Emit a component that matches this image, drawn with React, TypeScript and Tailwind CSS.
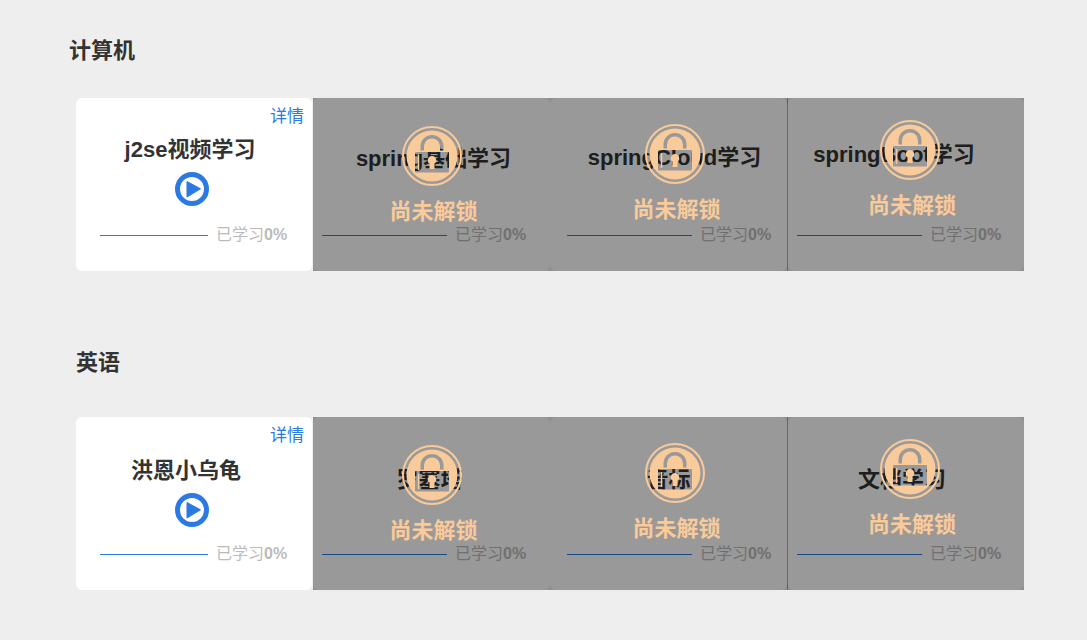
import { clsx } from "clsx";

type Course = {
  title: string;
  locked?: boolean;
};

type Subject = {
  name: string;
  headingClass: string;
  titleClass: string[];
  courses: Course[];
};

const subjects: Subject[] = [
  {
    name: "计算机",
    headingClass: "pl-[69px] mb-[31px]",
    titleClass: ["pt-[36px] pr-2", "pt-[45px] pl-1", "pt-[44px] pl-3", "pt-[41px] pr-6"],
    courses: [
      { title: "j2se视频学习" },
      { title: "spring基础学习", locked: true },
      { title: "springCloud学习", locked: true },
      { title: "springBoot学习", locked: true },
    ],
  },
  {
    name: "英语",
    headingClass: "pl-[76px] mb-[38px]",
    titleClass: ["pt-[38px] pr-4", "pt-[47px] pr-1", "pt-[47px]", "pt-[47px] pr-2"],
    courses: [
      { title: "洪恩小乌龟" },
      { title: "罗塞塔", locked: true },
      { title: "音标", locked: true },
      { title: "文档学习", locked: true },
    ],
  },
];

const progressClass = ["pl-6", "pl-[9px]", "pl-[17px]", "pl-[9px]"];
const lockClass = ["", "pt-[28px] pl-1", "pt-[26px] pl-4", "pt-[22px] pl-3"];

function PlayIcon() {
  return (
    <svg viewBox="0 0 34 34" className="size-[34px]" aria-hidden="true">
      <circle cx="17" cy="17" r="14.5" fill="none" stroke="#2b7ae4" strokeWidth="5" />
      <path d="M12 9.500 L25.500 16.800 L12 25 Z" fill="#2b7ae4" stroke="#2b7ae4" strokeLinejoin="round" />
    </svg>
  );
}

function LockIcon() {
  return (
    <svg viewBox="0 0 60 60" className="mr-1 size-[60px]" aria-hidden="true">
      <circle cx="30" cy="30" r="29" fill="none" stroke="#f9ca9a" strokeWidth="2" />
      <path
        fill="#f9ca9a"
        fillRule="evenodd"
        d="M30 4.500a25.500 25.500 0 1 0 0 51a25.500 25.500 0 1 0 0-51Z M18.500 24.500V20.500a11.500 11.500 0 0 1 23 0V24.500H38V20.500a8 8 0 0 0-16 0V24.500Z M14 26H46a1 1 0 0 1 1 1V45.500a1 1 0 0 1-1 1H14a1 1 0 0 1-1-1V27a1 1 0 0 1 1-1Z"
      />
      <path d="M16.500 29V44" stroke="#f9ca9a" strokeWidth="1.500" />
      <path d="M30 30a4.200 4.200 0 0 1 2.500 7.600V43h-5V37.600a4.200 4.200 0 0 1 2.500-7.600Z" fill="#f9ca9a" />
    </svg>
  );
}

function CourseCard({ course, column, titleClass }: { course: Course; column: number; titleClass: string }) {
  return (
    <li className={clsx("relative h-[173px]", column === 3 && "border-l border-[#666]")}>
      <article className={clsx("flex h-full flex-col rounded-md bg-white", !course.locked && "mr-px")}>
        {course.locked ? null : (
          <a href="#detail" className="absolute top-[5px] right-[9px] text-[17px] leading-7 text-[#2b7ae4]">
            详情
          </a>
        )}
        <h3 className={clsx("text-center text-[22px] leading-8 font-bold whitespace-nowrap text-[#333]", titleClass)}>
          {course.title}
        </h3>
        {course.locked ? null : (
          <button type="button" aria-label="播放" className="mt-1.5 ml-[99px] w-fit">
            <PlayIcon />
          </button>
        )}
        <div className={clsx("mt-auto flex items-center gap-2 pb-6", progressClass[column])}>
          <div className={clsx("h-px bg-[#2b7ae4]", course.locked ? "w-[125px]" : "w-[108px]")} />
          <span className="text-base leading-6 whitespace-nowrap text-[#bbb]">
            已学习<b>0%</b>
          </span>
        </div>
      </article>
      {course.locked ? (
        <div className={clsx("absolute inset-0 flex flex-col items-center bg-black/40", lockClass[column])}>
          <LockIcon />
          <p className="mt-2 text-[22px] leading-9 font-bold text-[#f9ca9a]">尚未解锁</p>
        </div>
      ) : null}
    </li>
  );
}

export default function App() {
  return (
    <main className="min-h-screen bg-[#eee] pt-[35px] font-['Liberation_Sans','Noto_Sans_CJK_SC',sans-serif]">
      {subjects.map((subject, index) => (
        <section key={subject.name} className={clsx(index < subjects.length - 1 && "pb-[76px]")}>
          <h2 className={clsx("text-[22px] leading-8 font-bold text-[#333]", subject.headingClass)}>{subject.name}</h2>
          <ul className="mr-[63px] ml-[76px] grid grid-cols-4">
            {subject.courses.map((course, column) => (
              <CourseCard
                key={course.title}
                course={course}
                column={column}
                titleClass={subject.titleClass[column]}
              />
            ))}
          </ul>
        </section>
      ))}
    </main>
  );
}
